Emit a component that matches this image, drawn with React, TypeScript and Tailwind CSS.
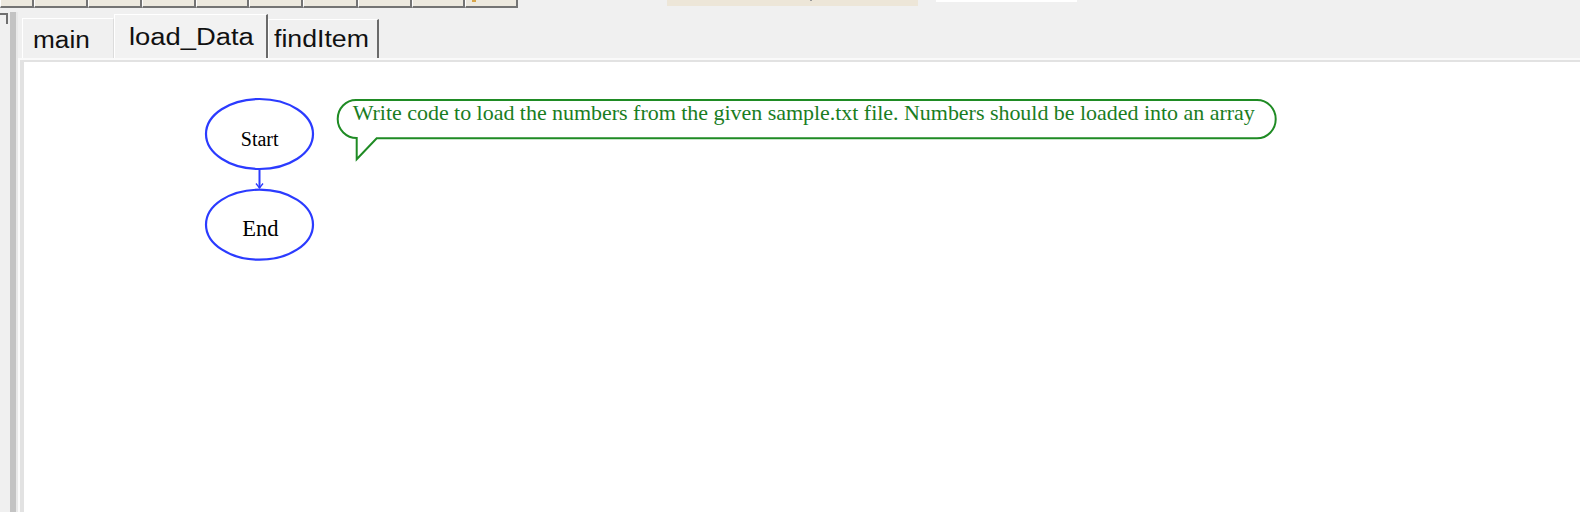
import React from "react";

const btnWidths = [34, 54, 54, 54, 53, 54, 55, 54, 53, 53];

export default function App() {
  return (
    <div
      className="w-[1580px] h-[512px] bg-[#f0f0f0] flex flex-col overflow-hidden"
      style={{ fontFamily: "'Liberation Sans', Arial, sans-serif" }}
    >
      {/* top toolbar strip (cut off) */}
      <div className="h-[12px] flex items-start shrink-0">
        <div className="flex">
          {btnWidths.map((w, i) => (
            <div
              key={i}
              className="h-[8px] bg-[#ede9df] border-l border-l-white border-r-2 border-r-[#747474] border-b-2 border-b-[#747474] relative"
              style={{ width: w }}
            >
              {i === btnWidths.length - 1 && (
                <div className="absolute left-[6px] top-0 w-[4px] h-[2px] bg-[#d8a54a]" />
              )}
            </div>
          ))}
        </div>
        <div className="ml-[149px] w-[251px] h-[6px] bg-[#ede6d8] relative">
          <div className="absolute left-[143px] top-0 w-[2px] h-[1px] bg-[#9a9a9a]" />
        </div>
        <div className="ml-[18px] w-[141px] h-[2px] bg-white" />
      </div>

      {/* body */}
      <div className="flex flex-1 min-h-0">
        <div className="w-[10px] shrink-0">
          <div className="mt-[1px] w-[8px] h-[11px] border-t-2 border-r-2 border-[#6f6f6f]" />
        </div>
        <div className="w-[6px] shrink-0 bg-[#c3c3c3]" />
        <div className="w-[2px] shrink-0 bg-[#e9e9e9]" />

        <div className="flex-1 flex flex-col min-w-0">
          {/* tab strip */}
          <div className="h-[46px] flex items-end pl-[4px] shrink-0 text-[23px] leading-[26px] text-[#111]">
            <div className="w-[92px] h-[40px] bg-[#f0f0f0] border-t border-l border-white border-r border-r-[#dcdcdc] pl-[10px] pt-[8px]">
              <span className="inline-block origin-left scale-x-[1.14]">main</span>
            </div>
            <div className="w-[154px] h-[44px] bg-[#f2f2f2] border-t border-l border-white border-r-2 border-r-[#6a6a6a] pl-[14px] pt-[9px]">
              <span className="inline-block origin-left scale-x-[1.19]">load_Data</span>
            </div>
            <div className="w-[111px] h-[39px] bg-[#f0f0f0] border-t border-l border-white border-r-2 border-r-[#6a6a6a] pl-[5px] pt-[6px]">
              <span className="inline-block origin-left scale-x-[1.16]">findItem</span>
            </div>
          </div>

          {/* content frame */}
          <div className="flex-1 border-t-2 border-l-2 border-[#fafafa]">
            <div className="h-full border-t-2 border-l-4 border-[#e2e2e2] bg-white relative overflow-hidden">
              <svg width="1556" height="450" className="block">
                {/* Start */}
                <ellipse cx="235.5" cy="72" rx="53.5" ry="35" fill="none" stroke="#2b3bff" strokeWidth="2.2" />
                <text
                  x="235.7"
                  y="84"
                  textAnchor="middle"
                  fontSize="20"
                  fill="#000"
                  fontFamily="'Liberation Serif', 'Times New Roman', serif"
                >
                  Start
                </text>
                {/* connector */}
                <line x1="235.5" y1="107" x2="235.5" y2="126" stroke="#2b3bff" strokeWidth="2" />
                <polyline points="232,121.5 235.5,126 239,121.5" fill="none" stroke="#2b3bff" strokeWidth="1.3" />
                {/* End */}
                <ellipse cx="235.5" cy="162.7" rx="53.5" ry="35" fill="none" stroke="#2b3bff" strokeWidth="2.2" />
                <text
                  x="236.3"
                  y="173.7"
                  textAnchor="middle"
                  fontSize="22.5"
                  fill="#000"
                  fontFamily="'Liberation Serif', 'Times New Roman', serif"
                >
                  End
                </text>
                {/* comment bubble */}
                <path
                  d="M 332.7 97.3 L 352.7 76.3 L 1233 76.3 A 18.7 19 0 0 0 1251.7 57.3 A 18.7 19 0 0 0 1233 38 L 332 38 A 18.3 19 0 0 0 313.7 57 A 19 19 0 0 0 332.7 76 Z"
                  fill="#fff"
                  stroke="#1f8b24"
                  strokeWidth="2"
                  strokeLinejoin="miter"
                />
                <text
                  x="328.7"
                  y="58"
                  fontSize="22"
                  fill="#1a7d1f"
                  textLength="902"
                  lengthAdjust="spacing"
                  fontFamily="'Liberation Serif', 'Times New Roman', serif"
                >
                  Write code to load the numbers from the given sample.txt file. Numbers should be loaded into an array
                </text>
              </svg>
            </div>
          </div>
        </div>
      </div>
    </div>
  );
}
